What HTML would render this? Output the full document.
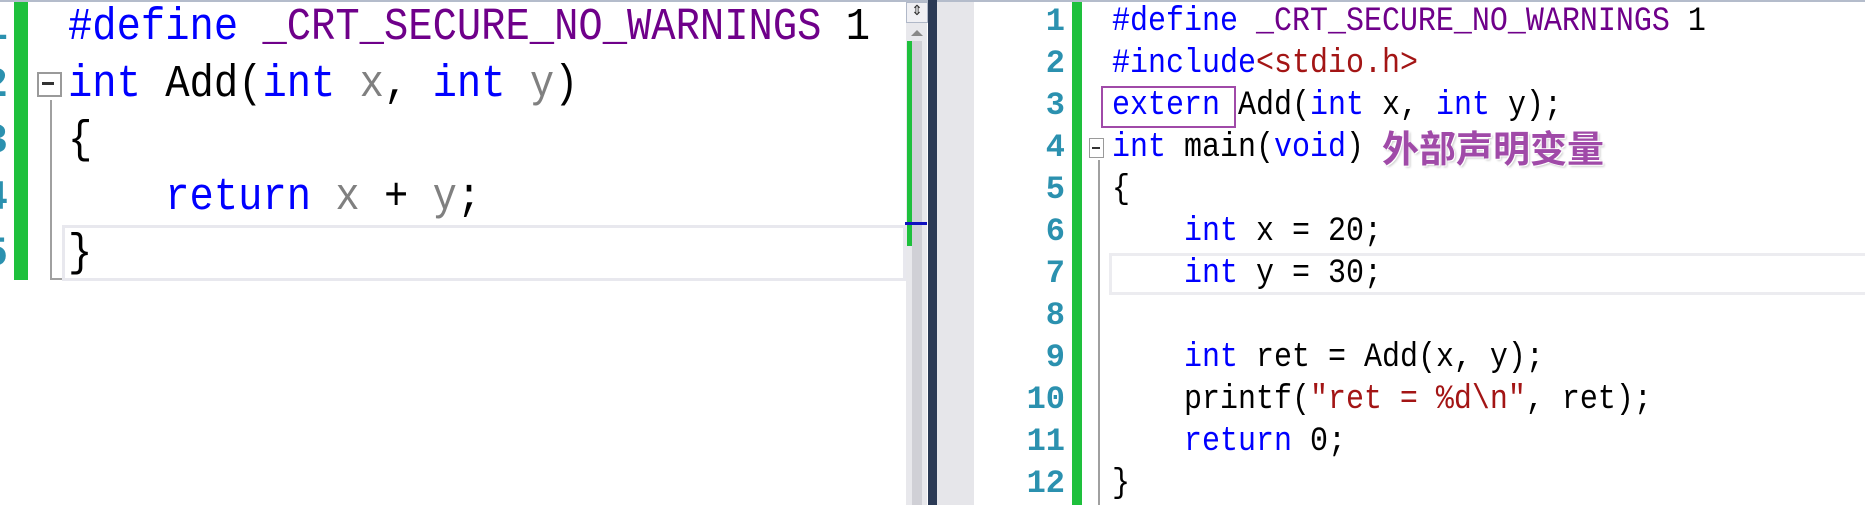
<!DOCTYPE html>
<html><head><meta charset="utf-8"><style>
body{margin:0;width:1865px;height:505px;background:#fff;position:relative;overflow:hidden;font-family:"Liberation Mono",monospace}
div{position:absolute}
.l{white-space:pre;font-size:45px;line-height:56.5px;left:68px;transform:scaleX(0.9);transform-origin:0 0}
.r{white-space:pre;font-size:34px;line-height:42px;left:1112px;transform:scaleX(0.882);transform-origin:0 0}
.k{color:#0000ff}.m{color:#6f008a}.g{color:#808080}.s{color:#a31515}
.n{color:#2b91af;text-align:right;font-weight:bold}
</style></head><body>
<div style="left:0;top:0;width:1865px;height:2px;background:#b4bccb"></div>
<div style="left:14px;top:2px;width:14px;height:278px;background:#1ec03c"></div>
<div class="n" style="left:-40px;top:0;width:48px;font-size:42px;line-height:56.5px;white-space:pre">1
2
3
4
5</div>
<div style="left:62px;top:225px;width:838px;height:50px;border:3px solid #e8e8ee"></div>
<div style="left:37px;top:72px;width:21px;height:21px;border:2px solid #9a9a9a;background:#fff"></div>
<div style="left:42px;top:82px;width:12px;height:3px;background:#333"></div>
<div style="left:50px;top:100px;width:2px;height:180px;background:#a0a0a0"></div>
<div style="left:50px;top:278px;width:12px;height:2px;background:#a0a0a0"></div>
<div class="l" style="top:0"><span class="k">#define</span> <span class="m">_CRT_SECURE_NO_WARNINGS</span> 1
<span class="k">int</span> Add(<span class="k">int</span> <span class="g">x</span>, <span class="k">int</span> <span class="g">y</span>)
{
    <span class="k">return</span> <span class="g">x</span> + <span class="g">y</span>;
}</div>
<div style="left:906px;top:2px;width:21px;height:503px;background:#e8e8ec"></div>
<div style="left:906px;top:2px;width:20px;height:19px;border:1px solid #b0b8c8;background:#f0f0f4;font-size:14px;line-height:19px;text-align:center;color:#333">⇕</div>
<div style="left:911px;top:30px;width:0;height:0;border-left:6px solid transparent;border-right:6px solid transparent;border-bottom:6px solid #888"></div>
<div style="left:912px;top:41px;width:10px;height:464px;background:#d0d0d6"></div>
<div style="left:907px;top:41px;width:5px;height:205px;background:#1ec03c"></div>
<div style="left:905px;top:222px;width:22px;height:3px;background:#1010c0"></div>
<div style="left:928px;top:0;width:9px;height:505px;background:#2b3a55"></div>
<div style="left:937px;top:2px;width:37px;height:503px;background:#e6e6ea"></div>
<div class="n" style="left:990px;top:1px;width:75px;font-size:32px;line-height:42px;white-space:pre">1
2
3
4
5
6
7
8
9
10
11
12</div>
<div style="left:1072px;top:2px;width:10px;height:503px;background:#1ec03c"></div>
<div style="left:1109px;top:253px;width:760px;height:36px;border:3px solid #ececf0"></div>
<div style="left:1101px;top:86px;width:131px;height:38px;border:2px solid #a04aa8"></div>
<div style="left:1089px;top:138px;width:13px;height:18px;border:1px solid #9a9a9a;background:#fff"></div>
<div style="left:1092px;top:147px;width:8px;height:2px;background:#333"></div>
<div style="left:1098px;top:160px;width:2px;height:345px;background:#a0a0a0"></div>
<div class="r" style="top:1px"><span class="k">#define</span> <span class="m">_CRT_SECURE_NO_WARNINGS</span> 1
<span class="k">#include</span><span class="s">&lt;stdio.h&gt;</span>
<span class="k">extern</span> Add(<span class="k">int</span> x, <span class="k">int</span> y);
<span class="k">int</span> main(<span class="k">void</span>)
{
    <span class="k">int</span> x = 20;
    <span class="k">int</span> y = 30;

    <span class="k">int</span> ret = Add(x, y);
    printf(<span class="s">"ret = %d\n"</span>, ret);
    <span class="k">return</span> 0;
}</div>
<div style="left:1382px;top:124px;font-family:'Noto Sans CJK SC',sans-serif;font-weight:bold;font-size:37px;line-height:44px;color:#a04aa8;text-shadow:1px 1px 0 #fff,-1px -1px 0 #fff,2px 2px 2px #ccc">外部声明变量</div>
</body></html>
